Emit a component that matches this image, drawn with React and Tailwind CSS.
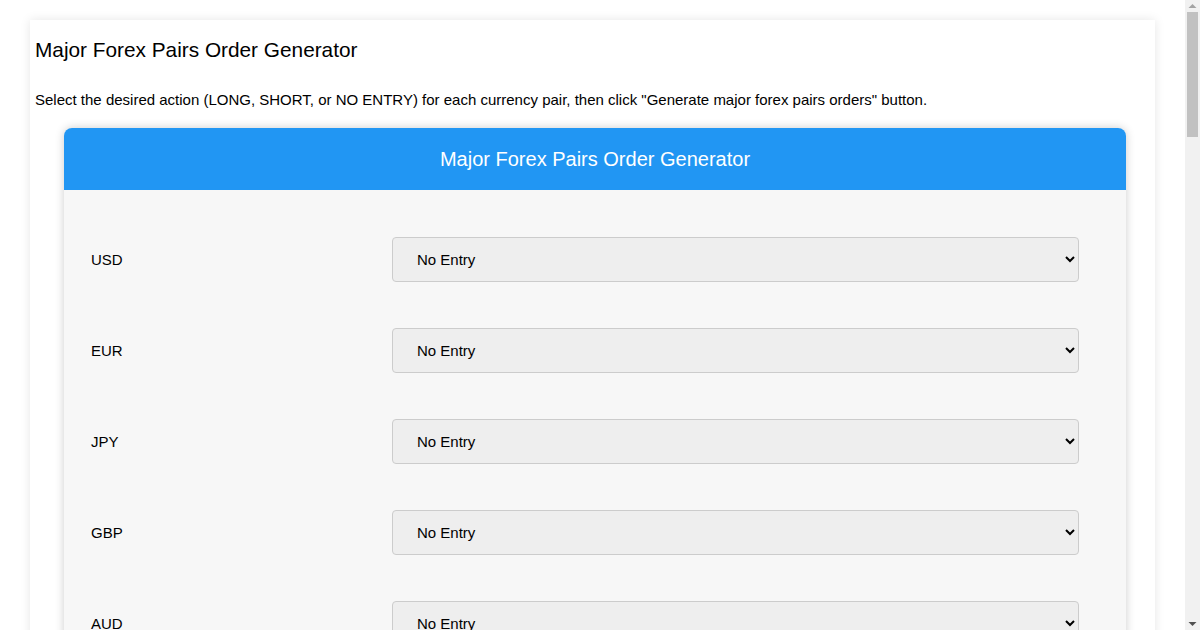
import React from 'react';

const currencies = ['USD', 'EUR', 'JPY', 'GBP', 'AUD', 'CAD', 'CHF', 'NZD'];

const CurrencyRow = ({ code }) => (
  <div className="flex items-center h-[45px]">
    <label className="w-[328px] pl-[27px] pt-[2px] text-[15px] text-black">{code}</label>
    <select
      defaultValue="none"
      className="w-[687px] h-[45px] pl-[20px] pr-[6px] text-[15px] text-black bg-[#eeeeee] border border-[#cccccc] rounded-[4px]"
    >
      <option value="long">Long</option>
      <option value="short">Short</option>
      <option value="none">No Entry</option>
    </select>
  </div>
);

// fake browser scrollbar, the reference shows the window scrolled at the top
const ScrollBar = () => (
  <div className="fixed top-0 right-0 w-[15px] h-screen bg-[#f1f1f1] flex flex-col items-center">
    <svg width="15" height="12" viewBox="0 0 15 12">
      <path d="M3.5 8 L7.5 4 L11.5 8 Z" fill="#a3a3a3" />
    </svg>
    <div className="w-[11px] h-[125px] bg-[#c1c1c1]" />
    <div className="flex-1" />
    <svg width="15" height="12" viewBox="0 0 15 12">
      <path d="M3.5 4 L7.5 8 L11.5 4 Z" fill="#505050" />
    </svg>
  </div>
);

export default function App() {
  return (
    <div className="min-h-screen bg-white pt-[20px] pl-[30px] pr-[45px] pb-[40px] font-['Liberation_Sans',Arial,sans-serif]">
      <div className="bg-white px-[5px] pt-[18px] pb-[40px] shadow-[0_0_10px_rgba(0,0,0,0.1)]">
        <h2 className="text-[20.8px] leading-[24px] text-black">Major Forex Pairs Order Generator</h2>
        <p className="mt-[29px] text-[15px] leading-[18px] text-black">
          Select the desired action (LONG, SHORT, or NO ENTRY) for each currency pair, then click "Generate major forex pairs orders" button.
        </p>

        <div className="mt-[19px] ml-[29px] w-[1062px] rounded-[8px] overflow-hidden bg-[#f7f7f7] shadow-[0_0_10px_rgba(0,0,0,0.2)]">
          <div className="h-[62px] bg-[#2196f3] flex items-center justify-center">
            <h3 className="text-[20px] text-white">Major Forex Pairs Order Generator</h3>
          </div>
          <div className="pt-[47px] pb-[47px] flex flex-col gap-[46px]">
            {currencies.map((c) => (
              <CurrencyRow key={c} code={c} />
            ))}
            <div className="flex justify-center">
              <button className="h-[45px] px-[24px] bg-[#2196f3] text-white text-[15px] rounded-[4px]">
                Generate major forex pairs orders
              </button>
            </div>
            <div className="px-[27px]">
              <textarea
                readOnly
                className="w-full h-[1400px] bg-white border border-[#cccccc] rounded-[4px] p-[10px] text-[15px]"
              />
            </div>
          </div>
        </div>
      </div>
      <ScrollBar />
    </div>
  );
}
